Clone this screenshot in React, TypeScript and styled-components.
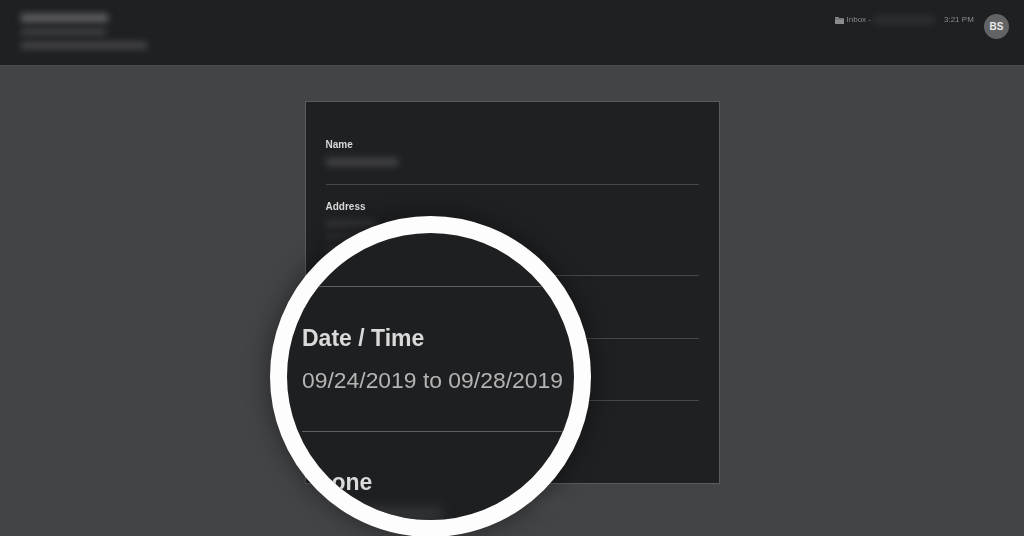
import React from "react";
import styled, { createGlobalStyle } from "styled-components";

const Global = createGlobalStyle`
  html, body {
    margin: 0;
    padding: 0;
    height: 536px;
    overflow: hidden;
    background: #434446;
    font-family: "Liberation Sans", Arial, sans-serif;
  }
`;

const Page = styled.div`
  position: relative;
  width: 1024px;
  height: 536px;
  overflow: hidden;
  background: #434446;
`;

const Header = styled.header`
  height: 66px;
  background: #1f2022;
  border-bottom: 1px solid #4a4b4d;
  box-sizing: border-box;
  display: flex;
  justify-content: space-between;
  padding: 14px 15px 0 21px;
`;

const Sender = styled.div`
  display: flex;
  flex-direction: column;
  gap: 7px;
`;

const Blur = styled.div<{ $w: number; $h?: number; $tone?: string; $soft?: number }>`
  width: ${(p) => p.$w}px;
  height: ${(p) => p.$h ?? 6}px;
  background: ${(p) => p.$tone ?? "#66676a"};
  filter: blur(${(p) => p.$soft ?? 3}px);
  flex-shrink: 0;
`;

const Meta = styled.div`
  display: flex;
  align-items: flex-start;
  color: #8b8c8e;
  font-size: 8px;
  line-height: 12px;
`;

const InboxLabel = styled.div`
  display: flex;
  align-items: center;
  gap: 3px;
  filter: blur(0.3px);
`;

const Time = styled.span`
  margin-left: 10px;
  width: 40px;
  filter: blur(0.3px);
`;

const Avatar = styled.div`
  width: 25px;
  height: 25px;
  border-radius: 50%;
  background: #626365;
  color: #e8e8e8;
  font-size: 10px;
  font-weight: 700;
  display: flex;
  align-items: center;
  justify-content: center;
`;

const Main = styled.main`
  display: flex;
  flex-direction: column;
  align-items: center;
  padding-top: 35px;
`;

const Card = styled.section`
  width: 415px;
  height: 383px;
  box-sizing: border-box;
  background: #1f2022;
  border: 1px solid #5a5b5d;
  padding: 37px 20px 0;
`;

const Row = styled.div<{ $h: number; $below?: number }>`
  height: ${(p) => p.$h}px;
  border-bottom: 1px solid #47484a;
  display: flex;
  flex-direction: column;
  gap: 7px;
  margin-bottom: ${(p) => p.$below ?? 15}px;
`;

const Label = styled.div`
  color: #d8d8d8;
  font-size: 10px;
  font-weight: 700;
  line-height: 12px;
  filter: blur(0.2px);
`;

const Lines = styled.div`
  display: flex;
  flex-direction: column;
  gap: 6px;
`;

const FooterBlur = styled.div`
  width: 415px;
  margin-top: 17px;
  display: flex;
  justify-content: flex-end;
  padding-right: 154px;
  box-sizing: border-box;
`;

const Lens = styled.div`
  position: absolute;
  left: 270px;
  top: 216px;
  width: 321px;
  height: 321px;
  box-sizing: border-box;
  border: 17px solid #fdfdfd;
  border-radius: 50%;
  background: #1e1f21;
  box-shadow: 0 0 26px rgba(0, 0, 0, 0.45);
  overflow: hidden;
  padding: 53px 0 0 15px;
`;

const LensRule = styled.div`
  height: 1px;
  background: #5e5f61;
`;

const LensLabel = styled.div`
  color: #dadada;
  font-size: 23px;
  font-weight: 700;
  line-height: 28px;
  filter: blur(0.3px);
`;

const LensValue = styled.div`
  color: #b4b4b4;
  font-size: 22.9px;
  line-height: 28px;
  margin-top: 14px;
  white-space: nowrap;
  filter: blur(0.3px);
`;

const LensSection = styled.div<{ $pad: number; $bottom: number }>`
  padding-top: ${(p) => p.$pad}px;
  padding-bottom: ${(p) => p.$bottom}px;
`;

const LensBlurTop = styled.div`
  position: absolute;
  left: 16px;
  top: 12px;
`;

const LensBlurBottom = styled.div`
  margin: 11px 0 0 30px;
`;

const Folder = () => (
  <svg width="9" height="8" viewBox="0 0 9 8" aria-hidden="true">
    <path d="M0 1h3.4l.8 1H9v6H0z" fill="#8b8c8e" />
    <rect y="2.6" width="9" height="0.6" fill="#4b4c4e" />
  </svg>
);

export default function App() {
  return (
    <Page>
      <Global />
      <Header>
        <Sender>
          <Blur $w={87} $h={8} $tone="#636467" $soft={3.5} />
          <Blur $w={85} $h={6} $tone="#454648" $soft={3.5} />
          <Blur $w={126} $h={7} $tone="#47484b" $soft={3.5} />
        </Sender>
        <Meta>
          <InboxLabel>
            <Folder />
            <span>Inbox -</span>
            <Blur $w={60} $h={10} $tone="#2c2d30" />
          </InboxLabel>
          <Time>3:21 PM</Time>
          <Avatar>BS</Avatar>
        </Meta>
      </Header>
      <Main>
        <Card>
          <Row $h={45} $below={16}>
            <Label>Name</Label>
            <Blur $w={72} $h={8} $tone="#434447" $soft={3.5} />
          </Row>
          <Row $h={74}>
            <Label>Address</Label>
            <Lines>
              <Blur $w={50} $h={7} $tone="#333436" />
              <Blur $w={45} $h={7} $tone="#2d2e30" />
              <Blur $w={35} $h={6} $tone="#2d2e30" />
            </Lines>
          </Row>
          <Row $h={47}>
            <Label>Date / Time</Label>
          </Row>
          <Row $h={46}>
            <Label>Phone</Label>
          </Row>
        </Card>
        <FooterBlur>
          <Blur $w={40} $h={7} $tone="#4a4b4d" $soft={6} />
        </FooterBlur>
      </Main>
      <Lens>
        <LensBlurTop>
          <Blur $w={50} $h={6} $tone="#28292b" />
        </LensBlurTop>
        <LensRule />
        <LensSection $pad={37} $bottom={37}>
          <LensLabel>Date / Time</LensLabel>
          <LensValue>09/24/2019 to 09/28/2019</LensValue>
        </LensSection>
        <LensRule />
        <LensSection $pad={36} $bottom={0}>
          <LensLabel>Phone</LensLabel>
          <LensBlurBottom>
            <Blur $w={110} $h={14} $tone="#333436" $soft={6} />
          </LensBlurBottom>
        </LensSection>
      </Lens>
    </Page>
  );
}
